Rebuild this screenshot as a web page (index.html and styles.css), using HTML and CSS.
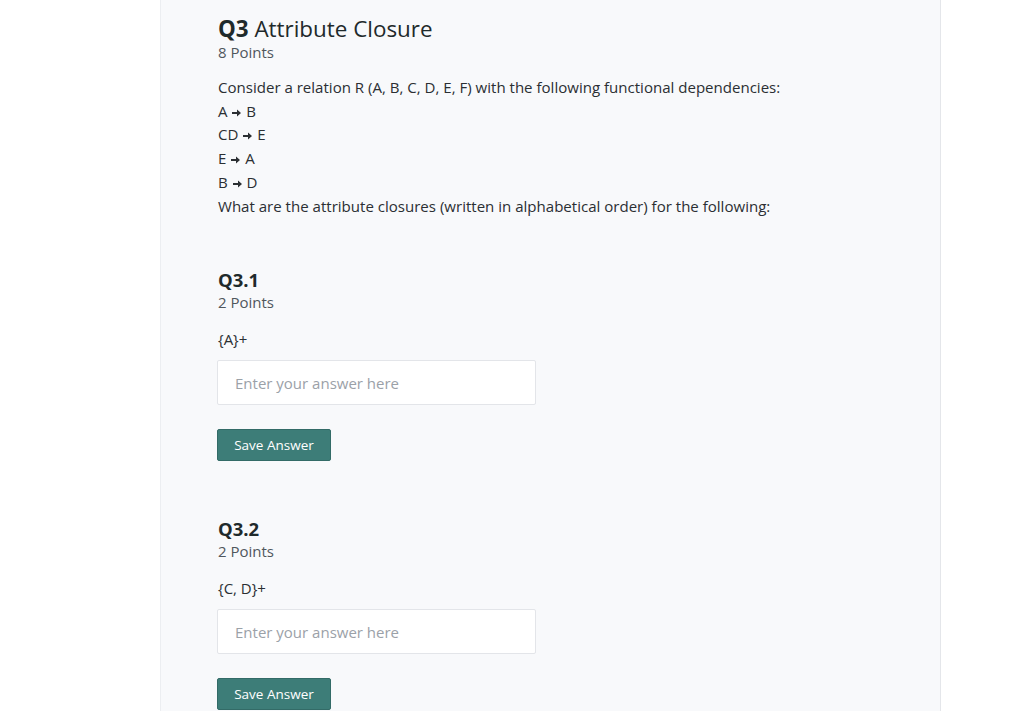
FILE: index.html
```html
<!DOCTYPE html>
<html lang="en">
<head>
    <meta charset="UTF-8">
    <meta name="viewport" content="width=device-width, initial-scale=1.0">
    <title>Q3 Attribute Closure</title>
    <link rel="stylesheet" href="styles.css">
</head>
<body>
    <div class="assignment">
        <div class="question">
            <h1 class="question-title"><b>Q3</b> Attribute Closure</h1>
            <div class="points">8 Points</div>
            <div class="question-body">
                <p>Consider a relation R (A, B, C, D, E, F) with the following functional dependencies:</p>
                <p>A <svg class="arrow" viewBox="0 0 9 8"><path d="M0 3h5V0.5L9 4L5 7.5V5H0z"/></svg> B</p>
                <p>CD <svg class="arrow" viewBox="0 0 9 8"><path d="M0 3h5V0.5L9 4L5 7.5V5H0z"/></svg> E</p>
                <p>E <svg class="arrow" viewBox="0 0 9 8"><path d="M0 3h5V0.5L9 4L5 7.5V5H0z"/></svg> A</p>
                <p>B <svg class="arrow" viewBox="0 0 9 8"><path d="M0 3h5V0.5L9 4L5 7.5V5H0z"/></svg> D</p>
                <p>What are the attribute closures (written in alphabetical order) for the following:</p>
            </div>
        </div>

        <div class="subquestion">
            <h2 class="sub-title">Q3.1</h2>
            <div class="points">2 Points</div>
            <p class="prompt">{A}+</p>
            <input type="text" class="answer" placeholder="Enter your answer here">
            <div><button type="button">Save Answer</button></div>
        </div>

        <div class="subquestion">
            <h2 class="sub-title">Q3.2</h2>
            <div class="points">2 Points</div>
            <p class="prompt">{C, D}+</p>
            <input type="text" class="answer" placeholder="Enter your answer here">
            <div><button type="button">Save Answer</button></div>
        </div>
    </div>
</body>
</html>
```

FILE: styles.css
```css
body {
    font-family: "Open Sans", Lato, Arial, sans-serif;
    background-color: #ffffff;
    color: #2b2f33;
    margin: 0;
    padding: 0;
}

.assignment {
    margin-left: 160px;
    width: 781px;
    min-height: 711px;
    background-color: #f8f9fb;
    border-left: 1px solid #eceef1;
    border-right: 1px solid #e4e6ea;
    padding: 16px 0 0 57px;
    box-sizing: border-box;
}

.question-title {
    font-size: 22.4px;
    font-weight: 400;
    margin: 0;
    line-height: 26px;
    color: #1f2a2b;
}

.question-title b {
    font-weight: 700;
}

.points {
    font-size: 15px;
    color: #50575d;
    line-height: 20px;
    margin-top: 0;
}

.question-body {
    margin-top: 14px;
    font-size: 15.05px;
}

.question-body p {
    margin: 0;
    line-height: 23.7px;
}

.arrow {
    width: 9px;
    height: 8px;
    fill: #2b2f33;
    vertical-align: 0;
    margin: 0 1px;
}

.subquestion {
    margin-top: 50px;
}

.subquestion + .subquestion {
    margin-top: 56px;
}

.sub-title {
    font-size: 18.5px;
    font-weight: 700;
    margin: 0;
    line-height: 24px;
    color: #1f2a2b;
}

.prompt {
    font-size: 15px;
    margin: 17px 0 0;
    line-height: 20px;
}

.answer {
    display: block;
    width: 319px;
    height: 45px;
    margin: 11px 0 0 -1px;
    box-sizing: border-box;
    border: 1px solid #e3e5e9;
    border-radius: 2px;
    background-color: #ffffff;
    padding: 0 17px;
    font-family: inherit;
    font-size: 15px;
    color: #2b2f33;
}

.answer::placeholder {
    color: #9ba1a8;
}

button {
    margin: 24px 0 0 -1px;
    background-color: #3d7d78;
    color: #ffffff;
    border: 1px solid #336b67;
    border-radius: 2px;
    width: 114px;
    height: 32px;
    font-family: inherit;
    font-size: 13.5px;
    cursor: pointer;
}

button:hover {
    background-color: #346b67;
}
```
